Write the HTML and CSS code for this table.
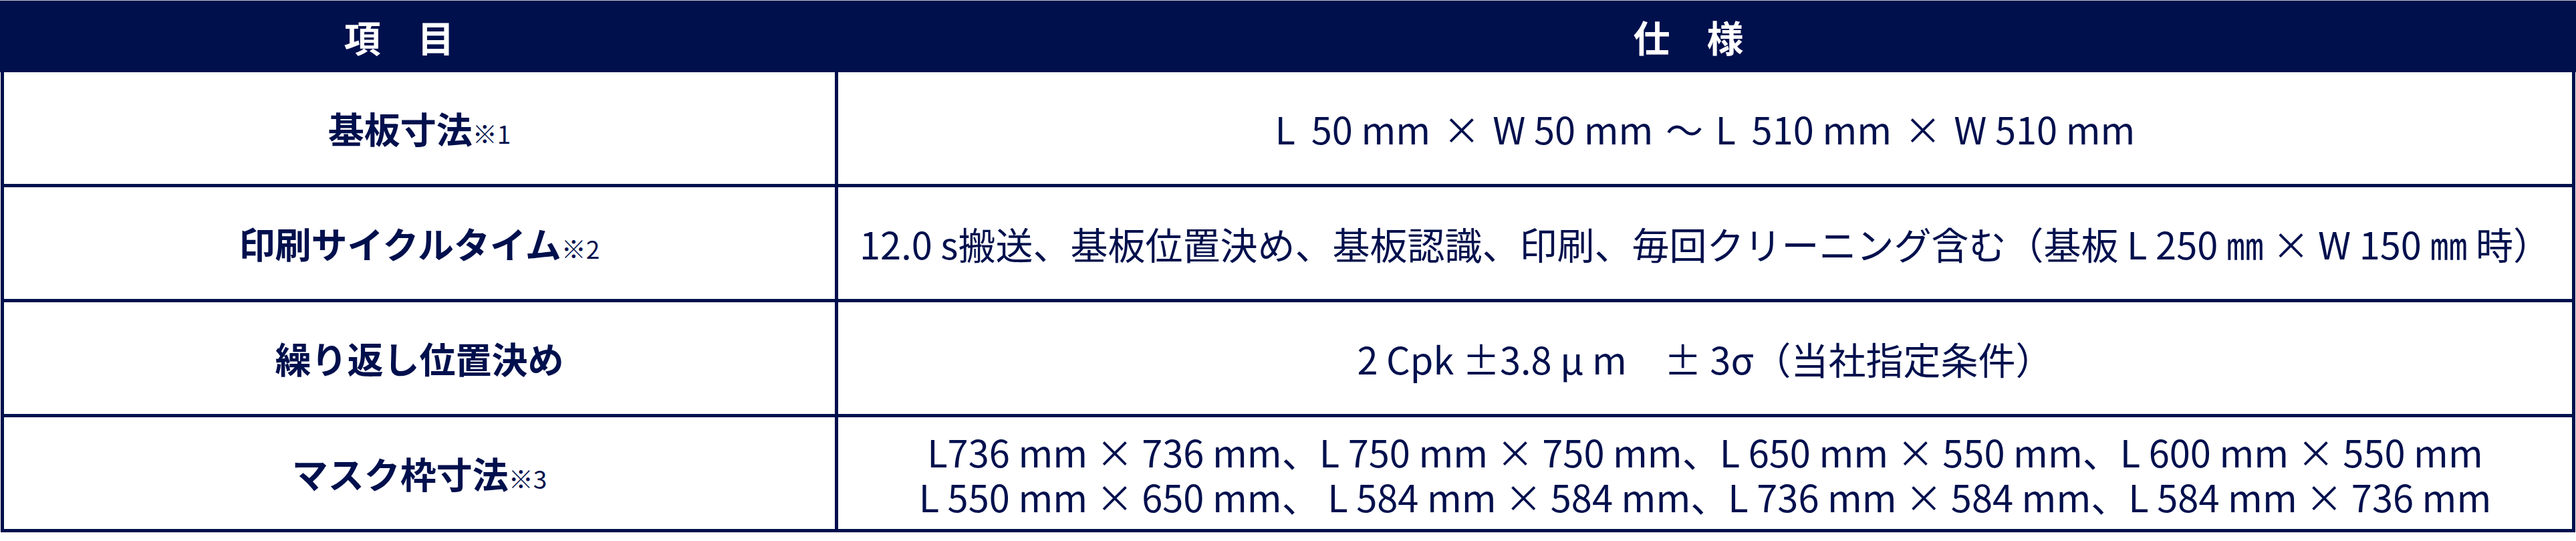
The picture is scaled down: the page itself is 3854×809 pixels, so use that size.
FILE: index.html
```html
<!DOCTYPE html>
<html lang="ja">
<head>
<meta charset="utf-8">
<title>仕様</title>
<link rel="stylesheet" href="styles.css">
</head>
<body>
<div class="spec">
  <div class="head">
    <div class="hcell hcell-item">項目</div>
    <div class="hcell hcell-spec">仕様</div>
  </div>
  <div class="row">
    <div class="item">基板寸法<span class="note">※1</span></div>
    <div class="val"><div>L&#8201; 50 mm <span class="op">×</span> W 50 mm <span class="op">～</span> L&#8201; 510 mm <span class="op">×</span> W 510 mm</div></div>
  </div>
  <div class="row">
    <div class="item">印刷サイクルタイム<span class="note">※2</span></div>
    <div class="val"><div>12.0 s搬送、基板位置決め、基板認識、印刷、毎回クリーニング含む（基板 L 250 ㎜ × W 150 ㎜ 時）</div></div>
  </div>
  <div class="row">
    <div class="item">繰り返し位置決め</div>
    <div class="val"><div>2 Cpk ±3.8 μ m　± 3σ（当社指定条件）</div></div>
  </div>
  <div class="row">
    <div class="item">マスク枠寸法<span class="note">※3</span></div>
    <div class="val val-multi">
      <div>L736 mm × 736 mm、L 750 mm × 750 mm、L 650 mm × 550 mm、L 600 mm × 550 mm</div>
      <div>L 550 mm × 650 mm、 L 584 mm × 584 mm、L 736 mm × 584 mm、L 584 mm × 736 mm</div>
    </div>
  </div>
</div>
</body>
</html>
```

FILE: styles.css
```css
html, body {
  margin: 0;
  padding: 0;
  background: #ffffff;
}

.spec {
  width: 3854px;
  border-top: 1px solid #c4c7d2;
  font-family: "Noto Sans CJK JP", "Noto Sans", sans-serif;
  color: #00104d;
}

.head {
  display: grid;
  grid-template-columns: 1249px 1fr;
  height: 107px;
  background: #00104d;
  color: #ffffff;
}

.hcell {
  display: flex;
  align-items: center;
  justify-content: center;
  font-size: 55px;
  font-weight: 700;
  letter-spacing: 1em;
  padding-bottom: 2px;
}

.hcell-spec {
  padding-left: 4px;
}

.row {
  display: grid;
  grid-template-columns: 1243px 1fr;
  height: 167px;
  margin-left: 1px;
  margin-right: 1px;
  border-left: 5px solid #00104d;
  border-right: 5px solid #00104d;
  border-bottom: 5px solid #00104d;
}

.item {
  display: flex;
  align-items: baseline;
  justify-content: center;
  align-self: center;
  font-size: 54px;
  font-weight: 700;
  line-height: 1;
}

.note {
  font-size: 37px;
  font-weight: 400;
}

.val {
  display: flex;
  flex-direction: column;
  align-items: center;
  justify-content: center;
  border-left: 5px solid #00104d;
  font-size: 56px;
  font-weight: 400;
  white-space: nowrap;
}

.op {
  margin: 0 6px;
}

.val-multi {
  line-height: 67px;
}
```
